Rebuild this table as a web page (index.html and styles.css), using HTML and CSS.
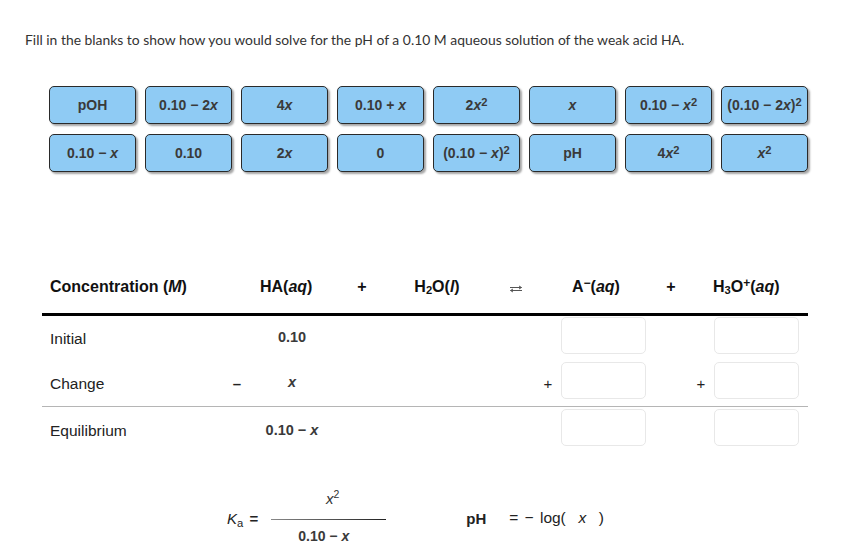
FILE: index.html
```html
<!DOCTYPE html>
<html>
<head>
<meta charset="utf-8">
<link rel="stylesheet" href="styles.css">
</head>
<body>
<p class="prompt">Fill in the blanks to show how you would solve for the pH of a 0.10 M aqueous solution of the weak acid HA.</p>

<div class="tiles">
  <div class="tile"><span>pOH</span></div>
  <div class="tile"><span>0.10 − 2<i>x</i></span></div>
  <div class="tile"><span>4<i>x</i></span></div>
  <div class="tile"><span>0.10 + <i>x</i></span></div>
  <div class="tile"><span>2<i>x</i><sup>2</sup></span></div>
  <div class="tile"><span><i>x</i></span></div>
  <div class="tile"><span>0.10 − <i>x</i><sup>2</sup></span></div>
  <div class="tile"><span>(0.10 − 2<i>x</i>)<sup>2</sup></span></div>
  <div class="tile"><span>0.10 − <i>x</i></span></div>
  <div class="tile"><span>0.10</span></div>
  <div class="tile"><span>2<i>x</i></span></div>
  <div class="tile"><span>0</span></div>
  <div class="tile"><span>(0.10 − <i>x</i>)<sup>2</sup></span></div>
  <div class="tile"><span>pH</span></div>
  <div class="tile"><span>4<i>x</i><sup>2</sup></span></div>
  <div class="tile"><span><i>x</i><sup>2</sup></span></div>
</div>

<div class="ice">
  <div class="row head">
    <div class="c-label">Concentration (<i>M</i>)</div>
    <div class="c-ha head-ha">HA(<i>aq</i>)</div>
    <div class="c-plus1">+</div>
    <div class="c-h2o">H<sub>2</sub>O(<i>l</i>)</div>
    <div class="c-arrow">
      <svg width="14" height="8" viewBox="0 0 14 8"><path d="M1 2.5H12.5M10 1L12.5 2.5L10 4M13 5.5H1.5M4 4L1.5 5.5L4 7" fill="none" stroke="#555" stroke-width="1"/></svg>
    </div>
    <div class="c-a head-a">A<sup>−</sup>(<i>aq</i>)</div>
    <div class="c-plus2">+</div>
    <div class="c-h3o head-h3o">H<sub>3</sub>O<sup>+</sup>(<i>aq</i>)</div>
  </div>

  <div class="row r1">
    <div class="c-label lbl">Initial</div>
    <div class="c-ha val">0.10</div>
    <div class="c-a"><div class="box"></div></div>
    <div class="c-h3o"><div class="box"></div></div>
  </div>

  <div class="row r2">
    <div class="c-sign1 dash">–</div>
    <div class="c-label lbl">Change</div>
    <div class="c-ha val"><i>x</i></div>
    <div class="c-sign2 sign">+</div>
    <div class="c-a"><div class="box"></div></div>
    <div class="c-sign3 sign">+</div>
    <div class="c-h3o"><div class="box"></div></div>
  </div>

  <div class="row r3">
    <div class="c-label lbl">Equilibrium</div>
    <div class="c-ha val">0.10 − <i>x</i></div>
    <div class="c-a"><div class="box"></div></div>
    <div class="c-h3o"><div class="box"></div></div>
  </div>
</div>

<div class="eqs">
  <div class="ka"><i>K</i><sub>a</sub> <span class="eq">=</span></div>
  <div class="frac">
    <div class="num"><i>x</i><sup>2</sup></div>
    <div class="bar"></div>
    <div class="den">0.10 − <i>x</i></div>
  </div>
  <div class="ph">pH</div>
  <div class="log">= − log( &nbsp;<i>x</i>&nbsp; )</div>
</div>
</body>
</html>
```

FILE: styles.css
```css
html, body {
  margin: 0;
  padding: 0;
  background: #fff;
}
body {
  width: 853px;
  height: 559px;
  overflow: hidden;
  font-family: "Liberation Sans", Arial, sans-serif;
  color: #222;
}

.prompt {
  margin: 32px 0 0 25px;
  font-family: Lato, "Liberation Sans", sans-serif;
  font-size: 13.9px;
  line-height: 16px;
  color: #333;
}

.tiles {
  margin: 38px 0 0 49px;
  display: grid;
  grid-template-columns: repeat(8, 87px);
  grid-auto-rows: 38px;
  column-gap: 9px;
  row-gap: 10px;
}
.tile {
  box-sizing: border-box;
  background: #8fcbf4;
  border: 1px solid #2a2a2a;
  border-radius: 5px;
  box-shadow: 2px 2px 2px rgba(0, 0, 0, 0.35);
  display: flex;
  align-items: center;
  justify-content: center;
  font-weight: bold;
  font-size: 14px;
  color: #3a3a3a;
  white-space: nowrap;
}
.tile span { display: block; }
.tile sup {
  font-size: 0.8em;
  line-height: 0;
  vertical-align: 0.4em;
}

.ice {
  margin: 89px 0 0 42px;
  width: 766px;
}
.row {
  display: grid;
  grid-template-columns: 186px 18px 92px 48px 102px 52px 16px 94px 42px 18px 98px;
  align-items: center;
}
.head {
  height: 52px;
  border-bottom: 3px solid #000;
  font-weight: bold;
  font-size: 16px;
  color: #111;
}
.head sub { font-size: 0.7em; vertical-align: -0.2em; line-height: 0; }
.head sup { font-size: 0.75em; vertical-align: 0.45em; line-height: 0; }

.c-label { grid-column: 1; grid-row: 1; padding-left: 8px; }
.c-sign1 { grid-column: 2; grid-row: 1; text-align: center; }
.c-ha { grid-column: 3; grid-row: 1; text-align: center; }
.c-plus1 { grid-column: 4; text-align: center; }
.c-h2o { grid-column: 5; text-align: center; }
.c-arrow { grid-column: 6; display: flex; justify-content: center; padding-left: 4px; padding-top: 3px; }
.c-sign2 { grid-column: 7; grid-row: 1; text-align: center; }
.c-a { grid-column: 8; grid-row: 1; }
.c-plus2 { grid-column: 9; text-align: center; }
.c-sign3 { grid-column: 10; grid-row: 1; text-align: center; }
.c-h3o { grid-column: 11; grid-row: 1; }

.head-ha { text-align: left; padding-left: 14px; }
.head-a { padding-left: 16px; }
.head-h3o { padding-left: 3px; }

.box {
  box-sizing: border-box;
  width: 85px;
  height: 37px;
  border: 1.5px solid #e8e8e8;
  border-radius: 5px;
  background: #fff;
}
.c-a .box { margin-left: 5px; }
.c-h3o .box { margin-left: 4px; }

.r1, .r2, .r3 { height: 37px; }
.r1 { margin-top: 1px; }
.r2 { margin-top: 8px; padding-bottom: 7px; border-bottom: 1px solid #b5b5b5; }
.r3 { margin-top: 2px; }

.lbl {
  font-size: 15.5px;
  color: #222;
  padding-top: 6px;
}
.val {
  font-size: 14.5px;
  font-weight: bold;
  color: #3a3a3a;
  padding-top: 2px;
}
.r3 .val { padding-top: 4px; }
.dash {
  font-size: 15px;
  font-weight: bold;
  color: #222;
  padding-top: 5px;
}
.sign {
  font-size: 15px;
  color: #222;
  padding-top: 5px;
}

.eqs {
  margin: 40px 0 0 227px;
  display: flex;
  align-items: center;
  font-size: 15px;
  color: #222;
}
.ka {
  padding-top: 3px;
  white-space: nowrap;
}
.ka sub { font-size: 0.75em; vertical-align: -0.25em; line-height: 0; }
.ka .eq { font-weight: bold; margin-left: 2px; }
.frac {
  margin-left: 13px;
  display: flex;
  flex-direction: column;
  align-items: center;
  width: 115px;
}
.num {
  line-height: 22px;
  padding-bottom: 9px;
  padding-left: 8px;
  padding-top: 2px;
  font-size: 15px;
  color: #333;
}
.num sup { font-size: 0.7em; line-height: 0; vertical-align: 0.55em; }
.bar {
  width: 115px;
  height: 1px;
  background: linear-gradient(to right, #888, #222);
}
.den {
  line-height: 22px;
  padding-top: 5px;
  padding-right: 10px;
  font-size: 14px;
  font-weight: bold;
  color: #3a3a3a;
}
.ph {
  margin-left: 80px;
  padding-top: 3px;
  font-weight: bold;
  color: #222;
}
.log {
  margin-left: 23px;
  padding-top: 3px;
  font-size: 15.5px;
  white-space: nowrap;
  word-spacing: 2px;
}
```
